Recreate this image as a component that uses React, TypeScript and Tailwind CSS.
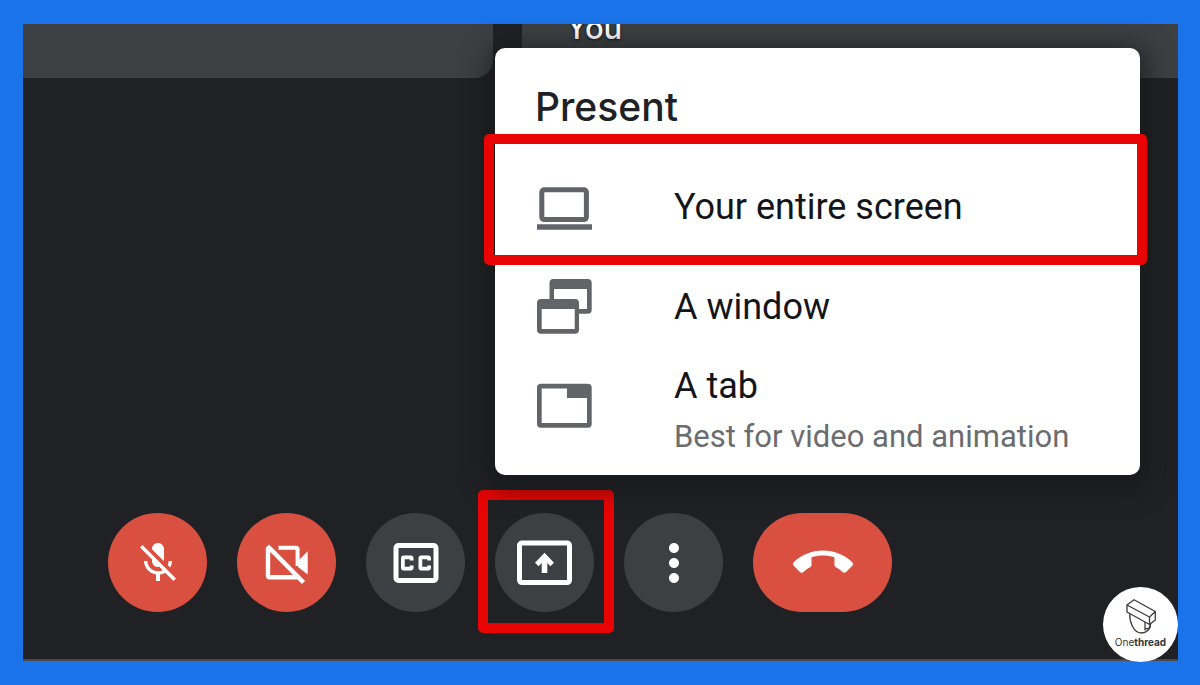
/**
 * App — bottom part of a video call with the "Present" menu open.
 *
 * The menu is anchored to the present button, so it keeps its place
 * above the button whatever the window size is.
 */

import type { ReactNode } from "react";
import { MdCallEnd, MdMicOff, MdMoreVert, MdOutlineClosedCaption } from "react-icons/md";

/* ===== Icons ===== */

function VideoOffIcon() {
    return (
        <svg viewBox="0 0 60 60" className="size-15" fill="none" aria-hidden="true">
            <path d="M11 15v27.500q0 1.700 1.700 1.700H40" stroke="currentColor" strokeWidth="4.4" />
            <path d="M21.500 14.800H39q1.600 0 1.600 1.600V33" stroke="currentColor" strokeWidth="4" />
            <path d="M41 28l9.700-9.700v23.200L41 34z" fill="currentColor" />
            <path d="M10.500 13L46.500 49.500" stroke="currentColor" strokeWidth="4.6" />
        </svg>
    );
}

function PresentIcon() {
    return (
        <svg viewBox="0 0 60 60" className="size-15" fill="none" stroke="currentColor" aria-hidden="true">
            <rect x="4.5" y="10" width="50" height="39.6" rx="2.5" strokeWidth="5" />
            <path d="M29.500 40V24" strokeWidth="5.6" />
            <path d="M21.800 31.400l7.700-8 7.700 8" strokeWidth="5" />
        </svg>
    );
}

function LaptopIcon() {
    return (
        <svg viewBox="0 0 60 60" className="size-15" fill="none" aria-hidden="true">
            <rect x="6.8" y="13.8" width="44.6" height="29.8" rx="2.5" stroke="currentColor" strokeWidth="5" />
            <path d="M2 48.300h55v5.400H2z" fill="currentColor" />
        </svg>
    );
}

function WindowsIcon() {
    return (
        <svg viewBox="0 0 60 60" className="size-15" fill="currentColor" fillRule="evenodd" aria-hidden="true">
            <path d="M18.500 3h34.200q4 0 4 4v26.700q0 4-4 4H43v-4.600h9V13H19v11h-4.500V7q0-4 4-4z" />
            <path d="M6 23h34q4 0 4 4v26.700q0 4-4 4H6q-4 0-4-4V27q0-4 4-4zM6.700 33v20h33V33z" />
        </svg>
    );
}

function TabIcon() {
    return (
        <svg viewBox="0 0 60 60" className="size-15" fill="currentColor" fillRule="evenodd" aria-hidden="true">
            <path d="M6 7.700h46.700q4 0 4 4v36q0 4-4 4H6q-4 0-4-4v-36q0-4 4-4zM6.700 12.500V47H52V22H32v-9.500z" />
        </svg>
    );
}

function BrandMark() {
    return (
        <svg
            viewBox="0 0 30 35"
            className="h-[35px] w-[30px]"
            fill="none"
            stroke="#3a3a3a"
            strokeWidth="1.3"
            strokeLinejoin="round"
            aria-hidden="true"
        >
            <path d="M1 6l7-5.300 21.300 11.800-5.800 5.500z" />
            <path d="M1 6v7l22.500 12.500V18" />
            <path d="M29.300 12.500V21l-5.800 4.500" />
            <path d="M3.800 14.600c-.5 8 3.700 19.400 11.400 19.400 5.300 0 9.300-3.500 9.300-9.300" />
            <path d="M19 23v8.500M24.500 25.500c0 2.500-2 4.500-5.500 4.500" />
        </svg>
    );
}

/* ===== Shared pieces ===== */

interface ControlButtonProps {
    label: string;
    danger?: boolean;
    wide?: boolean;
    children: ReactNode;
}

function ControlButton({ label, danger, wide, children }: ControlButtonProps) {
    return (
        <button
            aria-label={label}
            className={`flex h-[99px] shrink-0 items-center justify-center rounded-full text-white ${
                wide ? "w-[139px]" : "w-[99px]"
            } ${danger ? "bg-[#d95040]" : "bg-[#3c4043]"}`}
        >
            {children}
        </button>
    );
}

interface MenuItemProps {
    icon: ReactNode;
    title: string;
    hint?: string;
    highlighted?: boolean;
}

function MenuItem({ icon, title, hint, highlighted }: MenuItemProps) {
    return (
        <li className="relative">
            <button className="flex w-full items-start gap-[79px] pl-10 text-left">
                <span className="py-5 text-[#636468]">{icon}</span>
                <span className={hint ? "pt-[5px]" : "pt-[26px] pb-6"}>
                    <span className="block text-[36px] leading-[50px] text-[#141518]">{title}</span>
                    {hint && <span className="block text-[31px] leading-[52px] text-[#6b6c70]">{hint}</span>}
                </span>
            </button>
            {/* Red frame lies over the row and past the menu's edges */}
            {highlighted && (
                <span className="pointer-events-none absolute -top-[22px] -right-[7px] -bottom-[9px] -left-[11px] rounded-[5px] border-10 border-[#e80404]" />
            )}
        </li>
    );
}

function PresentMenu() {
    return (
        <div className="absolute bottom-full left-0 z-10 mb-[38px] w-[645px] rounded-[10px] bg-white pb-3 shadow-[0_6px_24px_8px_rgba(20,20,20,0.6)]">
            <h2 className="px-10 pt-[34px] pb-6 font-[Inter,sans-serif] text-[39px] leading-[50px] font-medium text-[#202124]">
                Present
            </h2>
            <ul>
                <MenuItem icon={<LaptopIcon />} title="Your entire screen" highlighted />
                <MenuItem icon={<WindowsIcon />} title="A window" />
                <MenuItem icon={<TabIcon />} title="A tab" hint="Best for video and animation" />
            </ul>
        </div>
    );
}

export default function App() {
    return (
        <div className="flex min-h-screen bg-[#1b73e9] pt-6 pr-[22px] pb-6 pl-[23px] font-[Roboto,sans-serif]">
            <main className="relative flex flex-1 flex-col justify-between border-b-2 border-[#4a4a4c] bg-[#202124]">
                {/* ===== Participant tiles, only their lower edge is in view ===== */}
                <div className="flex h-[54px] gap-[29px]">
                    <div className="w-[470px] rounded-br-[18px] bg-[#3c4043]" />
                    <div className="flex-1 overflow-hidden bg-[#3c4043] px-11">
                        <p className="-mt-3 font-[Inter,sans-serif] text-[31px] leading-8 font-medium text-white text-shadow-[0_1px_3px_rgba(0,0,0,0.8)]">
                            You
                        </p>
                    </div>
                </div>

                {/* ===== Call controls ===== */}
                <div className="flex gap-[30px] pb-[47px] pl-[85px]">
                    <ControlButton label="Turn on microphone" danger>
                        <MdMicOff className="size-12" />
                    </ControlButton>
                    <ControlButton label="Turn on camera" danger>
                        <VideoOffIcon />
                    </ControlButton>
                    <ControlButton label="Turn on captions">
                        <MdOutlineClosedCaption className="size-15" />
                    </ControlButton>
                    <div className="relative">
                        <PresentMenu />
                        <ControlButton label="Present now">
                            <PresentIcon />
                        </ControlButton>
                        <span className="pointer-events-none absolute -top-[23px] -right-5 -bottom-[21px] -left-[17px] rounded-[5px] border-10 border-[#e80404]" />
                    </div>
                    <ControlButton label="More options">
                        <MdMoreVert className="size-15" />
                    </ControlButton>
                    <ControlButton label="Leave call" danger wide>
                        <MdCallEnd className="size-15" />
                    </ControlButton>
                </div>

                {/* ===== Brand badge ===== */}
                <div className="absolute right-0 -bottom-[3px] flex size-[75px] flex-col items-center rounded-full bg-white pt-3">
                    <BrandMark />
                    <span className="font-[Inter,sans-serif] text-[10px] leading-4 text-[#333]">
                        One<b>thread</b>
                    </span>
                </div>
            </main>
        </div>
    );
}
